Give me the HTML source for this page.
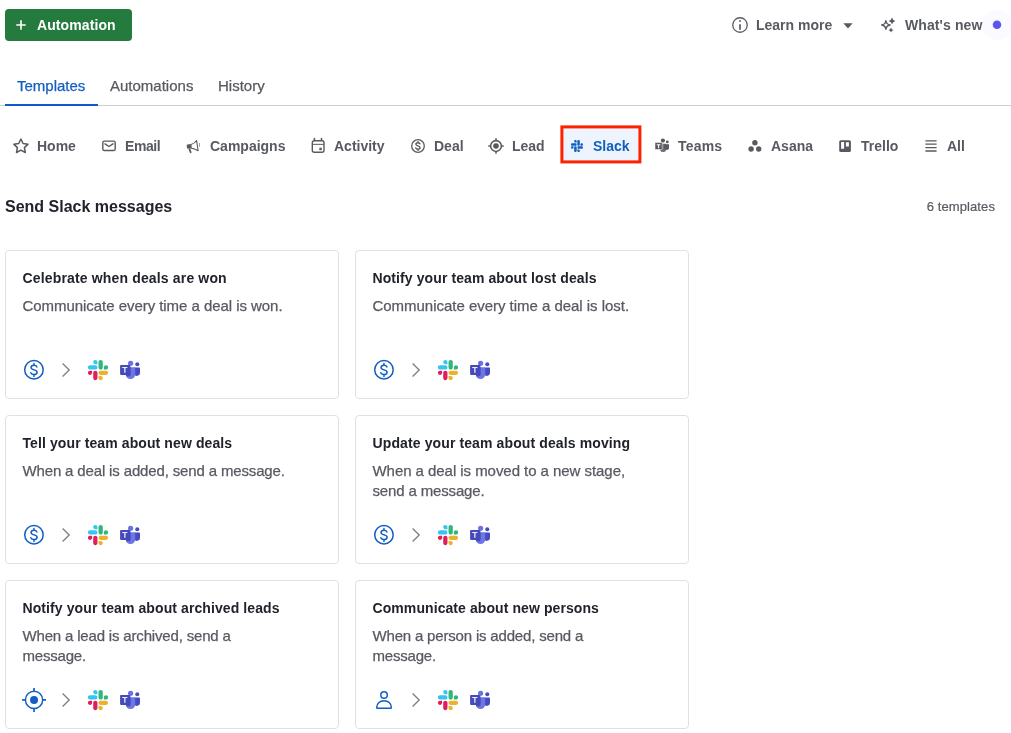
<!DOCTYPE html>
<html>
<head>
<meta charset="utf-8">
<title>Automations</title>
<style>
  html, body { margin: 0; padding: 0; }
  body {
    width: 1011px; height: 733px; overflow: hidden; position: relative;
    background: #ffffff;
    font-family: "Liberation Sans", sans-serif;
    color: #21232c;
  }
  #root { position: absolute; left: 0; top: 0; width: 1011px; height: 733px; will-change: transform; }
  .abs { position: absolute; }
  .t { position: absolute; white-space: nowrap; line-height: 20px; height: 20px; }
  svg { position: absolute; display: block; overflow: visible; }

  /* top bar */
  .btn { left: 5px; top: 9px; width: 127px; height: 32px; background: #257a3e; border-radius: 4px; }
  .btn .lbl { left: 32px; top: 6px; font-size: 14px; font-weight: 700; color: #fff; letter-spacing: 0.1px; }

  .topl { font-size: 14px; font-weight: 700; color: #585a61; top: 15px; }

  /* tabs */
  .tab { font-size: 15px; top: 76px; color: #585a61; -webkit-text-stroke: 0.25px currentColor; }
  .tab.on { color: #135ebf; }
  .tabline { left: 0; top: 105px; width: 1011px; height: 1px; background: #cdced1; }
  .tabon { left: 5px; top: 104px; width: 93px; height: 2px; background: #0f5acb; }

  /* category nav */
  .nav { font-size: 14px; font-weight: 700; color: #585a61; top: 136px; }
  .nav.on { color: #135ebf; }

  .h1 { left: 5px; top: 197px; font-size: 16px; font-weight: 700; color: #21232c; }
  .cnt { right: 16px; top: 197px; font-size: 13px; color: #585a61; letter-spacing: 0.1px; -webkit-text-stroke: 0.2px #585a61; }

  /* cards */
  .card { position: absolute; width: 332px; height: 147px; border: 1px solid #e1e1e4; border-radius: 4px; background: #fff; }
  .card .ttl { left: 16.5px; top: 17px; font-size: 14px; font-weight: 700; color: #21232c; }
  .card .d { left: 16.5px; font-size: 15px; color: #585a61; letter-spacing: -0.05px; -webkit-text-stroke: 0.25px #585a61; }
  .card .d1 { top: 45px; }
  .card .d2 { top: 65px; }
  .card svg.ci { left: -1px; top: -1px; }
</style>
</head>
<body>
<div id="root">

<!-- ===== top bar ===== -->
<div class="abs btn">
  <svg style="left:11px;top:11px" width="10" height="10" viewBox="0 0 10 10"><path d="M5 0.3v9.4M0.3 5h9.4" stroke="#fff" stroke-width="1.6" fill="none"/></svg>
  <span class="t lbl">Automation</span>
</div>

<svg id="ic-info" style="left:732px;top:17px" width="16" height="16" viewBox="0 0 16 16" fill="none" stroke="#585a61"><circle cx="8" cy="8" r="7.250" stroke-width="1.300"/><path d="M8 7.200v5.500" stroke-width="1.700"/><circle cx="8" cy="4.050" r="0.950" fill="#585a61" stroke="none"/></svg>
<span class="t topl" style="left:756px">Learn more</span>
<svg id="ic-caret" style="left:843px;top:22.600px" width="10" height="6" viewBox="0 0 10 6"><path d="M0.3 0.2h9.4L5 5.6z" fill="#585a61"/></svg>

<svg id="ic-spark" style="left:0;top:0" width="1011" height="50" viewBox="0 0 1011 50"><circle cx="997" cy="25" r="15.100" fill="#fafaff"/><circle cx="997" cy="24.750" r="4.250" fill="#5a55ee"/><path d="M885.9 20.75Q886.40 24.45 890.1 24.95Q886.40 25.45 885.9 29.15Q885.40 25.45 881.6999999999999 24.95Q885.40 24.45 885.9 20.75z" fill="none" stroke="#585a61" stroke-width="1.500" stroke-linejoin="round"/><path d="M892 17.5Q892.68 20.22 895.4 20.9Q892.68 21.58 892 24.299999999999997Q891.32 21.58 888.6 20.9Q891.32 20.22 892 17.5z" fill="#585a61"/><path d="M891 27.4Q891.50 29.40 893.5 29.9Q891.50 30.40 891 32.4Q890.50 30.40 888.5 29.9Q890.50 29.40 891 27.4z" fill="#585a61"/></svg>
<span class="t topl" style="left:905px;letter-spacing:0.1px">What's new</span>

<!-- ===== tabs ===== -->
<span class="t tab on" style="left:17px">Templates</span>
<span class="t tab" style="left:110px">Automations</span>
<span class="t tab" style="left:218px">History</span>
<div class="abs tabline"></div>
<div class="abs tabon"></div>

<!-- ===== category nav ===== -->
<svg style="left:0;top:0" width="1011" height="200" viewBox="0 0 1011 200"><rect x="561.900" y="126.900" width="78" height="35" fill="#edf4fe" stroke="#ff2200" stroke-width="3"/></svg>

<span class="t nav" style="left:37px">Home</span>
<span class="t nav" style="left:125px;letter-spacing:-0.4px">Email</span>
<span class="t nav" style="left:210px">Campaigns</span>
<span class="t nav" style="left:334px">Activity</span>
<span class="t nav" style="left:434px">Deal</span>
<span class="t nav" style="left:512px">Lead</span>
<span class="t nav on" style="left:593px">Slack</span>
<span class="t nav" style="left:678px;letter-spacing:0.2px">Teams</span>
<span class="t nav" style="left:771px">Asana</span>
<span class="t nav" style="left:861px">Trello</span>
<span class="t nav" style="left:947px">All</span>

<svg id="navicons" style="left:0;top:0" width="1011" height="733" viewBox="0 0 1011 733" fill="none">
  <defs>
    <g id="slack">
      <path d="M25.8 77.600c0 7.100-5.800 12.900-12.900 12.900S0 84.700 0 77.600s5.800-12.900 12.900-12.900h12.900v12.900z"/>
      <path d="M32.300 77.600c0-7.100 5.800-12.900 12.900-12.900s12.900 5.800 12.900 12.900v32.300c0 7.100-5.800 12.900-12.900 12.900s-12.900-5.800-12.900-12.900V77.600z"/>
    </g>
  </defs>
  <g stroke="#585a61" stroke-width="1.4" stroke-linejoin="round" stroke-linecap="round">
    <!-- star -->
    <path stroke-width="1.500" d="M20.900 139.000l2.150 4.500 4.950 0.650-3.600 3.450 0.900 4.900-4.400-2.400-4.400 2.400 0.900-4.900-3.600-3.450 4.950-0.650z"/>
    <!-- envelope -->
    <rect x="102.800" y="141.100" width="12.400" height="9.400" rx="1.600"/>
    <path d="M105 143.800l4 2.700 4-2.700"/>
    <!-- megaphone -->
    <path d="M191 144.500Q194.600 143.500 196.600 140.500L198.100 150.700Q194.500 148.500 191 148.100z" stroke-width="1.100"/>
    <path d="M186.700 145.300q0-0.700 0.700-0.800l3.400-0.500 0.500 4.100-3.400 0.600q-0.800 0.100-0.900-0.700z" fill="#585a61" stroke="none"/>
    <path d="M189.500 149.100l1.100 3.200" stroke-width="1.800"/>
    <path d="M199.400 143.400q0.500 1.500 0.100 3" stroke-width="0.900" opacity="0.700"/>
    <!-- calendar -->
    <rect x="312.3" y="140.7" width="11.7" height="11.5" rx="2" stroke-width="1.4"/>
    <path d="M312.3 144.35h11.7" stroke-width="1" stroke-linecap="butt"/>
    <path d="M314.4 138.5v2M321.5 138.5v2" stroke-width="1.6"/>
    <rect x="319.3" y="147.7" width="2.5" height="2.5" fill="#585a61" stroke="none"/>
    <!-- deal $ circle -->
    <circle cx="418" cy="146" r="6.300" stroke-width="1.300"/>
    <path d="M420 143.900c-0.400-0.700-1.100-1.100-2.100-1.100-1.200 0-2 0.600-2 1.500 0 2.100 4.200 1.100 4.200 3.300 0 1-0.900 1.600-2.100 1.600-1.100 0-1.900-0.500-2.300-1.300M418 141.600v1.200M418 149.200v1.200" stroke-width="1.35"/>
    <!-- lead target -->
    <circle cx="496" cy="146" r="5.4" stroke-width="1.55"/>
    <circle cx="496" cy="146" r="2.8" fill="#585a61" stroke="none"/>
    <path d="M496 138.3v2M496 151.700v2M488.3 146h2M501.700 146h2" stroke-width="1.5" stroke-linecap="butt"/>
    <!-- list -->
    <path d="M925.400 140.800h11.200M925.400 144.200h11.200M925.400 147.600h11.200M925.400 151h11.200" stroke-width="1.300" stroke-linecap="butt"/>
  </g>
  <!-- slack (blue) -->
  <g transform="translate(571 140) scale(0.0977)" fill="#135ebf">
    <use href="#slack"/>
    <use href="#slack" transform="rotate(90 61.400 61.400)"/>
    <use href="#slack" transform="rotate(180 61.400 61.400)"/>
    <use href="#slack" transform="rotate(270 61.400 61.400)"/>
  </g>
  <!-- teams (grey) -->
  <g fill="#585a61">
    <circle cx="662.900" cy="140.600" r="2.100"/>
    <circle cx="667.300" cy="141.900" r="1.400"/>
    <path d="M660 143.800h6.200v5.200a3.100 3.100 0 0 1-6.200 0z" opacity="0.85"/>
    <path d="M664 144.300h5v3.300a2.500 2.500 0 0 1-5 0z"/>
    <rect x="655" y="142.500" width="7.200" height="7" rx="0.600" stroke="#fff" stroke-width="0.500"/>
    <path d="M656.800 144.200h3.600v1h-1.250v3h-1.100v-3h-1.250z" fill="#fff"/>
  </g>
  <!-- asana -->
  <g fill="#585a61">
    <circle cx="754.900" cy="142.700" r="2.700"/>
    <circle cx="751.100" cy="149" r="2.700"/>
    <circle cx="758.700" cy="149" r="2.700"/>
  </g>
  <!-- trello -->
  <rect x="839.200" y="140.200" width="11.700" height="11.800" rx="1.600" fill="#585a61"/>
  <rect x="841.100" y="142.100" width="3" height="6.700" rx="0.300" fill="#fff"/>
  <rect x="845.900" y="142.200" width="3" height="4.400" rx="0.300" fill="#fff"/>
</svg>


<!-- ===== heading ===== -->
<span class="t h1">Send Slack messages</span>
<span class="t cnt">6 templates</span>

<!-- ===== cards ===== -->
<div class="card" style="left:5px;top:250px"><span class="t ttl" style="letter-spacing:0.156px">Celebrate when deals are won</span><span class="t d d1" style="letter-spacing:-0.047px">Communicate every time a deal is won.</span><svg class="ci" width="334" height="149" viewBox="0 0 334 149"><g fill="none" stroke="#135ebf" stroke-width="1.5" stroke-linecap="round" stroke-linejoin="round"><circle cx="28.950" cy="119.800" r="9.250"/><path d="M31.900 117c-0.450-1.100-1.500-1.750-2.900-1.750-1.750 0-2.950 0.900-2.950 2.250 0 3.150 6.050 1.550 6.050 4.750 0 1.450-1.250 2.350-3.100 2.350-1.550 0-2.700-0.650-3.200-1.850M28.950 113.400v1.850M28.950 124.600v1.850"/></g><path d="M57.600 113.500l6.600 6.500-6.600 6.500" fill="none" stroke="#7c7e86" stroke-width="1.300"/><g transform="translate(82.900 110) scale(0.1645)"><use href="#slack" fill="#e01e5a"/><use href="#slack" fill="#36c5f0" transform="rotate(90 61.400 61.400)"/><use href="#slack" fill="#2eb67d" transform="rotate(180 61.400 61.400)"/><use href="#slack" fill="#ecb22e" transform="rotate(270 61.400 61.400)"/></g><g><circle cx="125.600" cy="113.250" r="2.600" fill="#6a72e0"/><circle cx="132.300" cy="114.200" r="2.050" fill="#464cc0"/><path d="M129.500 117.500h4.700a0.800 0.800 0 0 1 0.800 0.800v4.300a3.300 3.300 0 0 1-6.600 0z" fill="#464cc0"/><path d="M120.800 117.300h8.600a0.800 0.800 0 0 1 0.800 0.800v6.300a4.700 4.700 0 0 1-9.400 0z" fill="#6d76e4"/><path d="M120.800 117.300h4.600v8.200a0.800 0.800 0 0 1-0.800 0.800h-3.300a4.700 4.700 0 0 1-0.500-2.100z" fill="#3a3fa6" opacity="0.750"/><rect x="115.100" y="115" width="10.300" height="9.900" rx="0.800" fill="#444ab9"/><path d="M117.200 117.100h5.200v0.950h-5.200z" fill="#fff"/><path d="M119 118h1.650v4.800h-1.650z" fill="#fff" opacity="0.700"/></g></svg></div>
<div class="card" style="left:355px;top:250px"><span class="t ttl" style="letter-spacing:0.094px">Notify your team about lost deals</span><span class="t d d1" style="letter-spacing:-0.027px">Communicate every time a deal is lost.</span><svg class="ci" width="334" height="149" viewBox="0 0 334 149"><g fill="none" stroke="#135ebf" stroke-width="1.5" stroke-linecap="round" stroke-linejoin="round"><circle cx="28.950" cy="119.800" r="9.250"/><path d="M31.900 117c-0.450-1.100-1.500-1.750-2.900-1.750-1.750 0-2.950 0.900-2.950 2.250 0 3.150 6.050 1.550 6.050 4.750 0 1.450-1.250 2.350-3.100 2.350-1.550 0-2.700-0.650-3.200-1.850M28.950 113.400v1.850M28.950 124.600v1.850"/></g><path d="M57.600 113.500l6.600 6.500-6.600 6.500" fill="none" stroke="#7c7e86" stroke-width="1.300"/><g transform="translate(82.900 110) scale(0.1645)"><use href="#slack" fill="#e01e5a"/><use href="#slack" fill="#36c5f0" transform="rotate(90 61.400 61.400)"/><use href="#slack" fill="#2eb67d" transform="rotate(180 61.400 61.400)"/><use href="#slack" fill="#ecb22e" transform="rotate(270 61.400 61.400)"/></g><g><circle cx="125.600" cy="113.250" r="2.600" fill="#6a72e0"/><circle cx="132.300" cy="114.200" r="2.050" fill="#464cc0"/><path d="M129.500 117.500h4.700a0.800 0.800 0 0 1 0.800 0.800v4.300a3.300 3.300 0 0 1-6.600 0z" fill="#464cc0"/><path d="M120.800 117.300h8.600a0.800 0.800 0 0 1 0.800 0.800v6.300a4.700 4.700 0 0 1-9.400 0z" fill="#6d76e4"/><path d="M120.800 117.300h4.600v8.200a0.800 0.800 0 0 1-0.800 0.800h-3.300a4.700 4.700 0 0 1-0.500-2.100z" fill="#3a3fa6" opacity="0.750"/><rect x="115.100" y="115" width="10.300" height="9.900" rx="0.800" fill="#444ab9"/><path d="M117.200 117.100h5.200v0.950h-5.200z" fill="#fff"/><path d="M119 118h1.650v4.800h-1.650z" fill="#fff" opacity="0.700"/></g></svg></div>
<div class="card" style="left:5px;top:415px"><span class="t ttl" style="letter-spacing:0.100px">Tell your team about new deals</span><span class="t d d1" style="letter-spacing:-0.147px">When a deal is added, send a message.</span><svg class="ci" width="334" height="149" viewBox="0 0 334 149"><g fill="none" stroke="#135ebf" stroke-width="1.5" stroke-linecap="round" stroke-linejoin="round"><circle cx="28.950" cy="119.800" r="9.250"/><path d="M31.900 117c-0.450-1.100-1.500-1.750-2.900-1.750-1.750 0-2.950 0.900-2.950 2.250 0 3.150 6.050 1.550 6.050 4.750 0 1.450-1.250 2.350-3.100 2.350-1.550 0-2.700-0.650-3.200-1.850M28.950 113.400v1.850M28.950 124.600v1.850"/></g><path d="M57.600 113.500l6.600 6.500-6.600 6.500" fill="none" stroke="#7c7e86" stroke-width="1.300"/><g transform="translate(82.900 110) scale(0.1645)"><use href="#slack" fill="#e01e5a"/><use href="#slack" fill="#36c5f0" transform="rotate(90 61.400 61.400)"/><use href="#slack" fill="#2eb67d" transform="rotate(180 61.400 61.400)"/><use href="#slack" fill="#ecb22e" transform="rotate(270 61.400 61.400)"/></g><g><circle cx="125.600" cy="113.250" r="2.600" fill="#6a72e0"/><circle cx="132.300" cy="114.200" r="2.050" fill="#464cc0"/><path d="M129.500 117.500h4.700a0.800 0.800 0 0 1 0.800 0.800v4.300a3.300 3.300 0 0 1-6.600 0z" fill="#464cc0"/><path d="M120.800 117.300h8.600a0.800 0.800 0 0 1 0.800 0.800v6.300a4.700 4.700 0 0 1-9.400 0z" fill="#6d76e4"/><path d="M120.800 117.300h4.600v8.200a0.800 0.800 0 0 1-0.800 0.800h-3.300a4.700 4.700 0 0 1-0.500-2.100z" fill="#3a3fa6" opacity="0.750"/><rect x="115.100" y="115" width="10.300" height="9.900" rx="0.800" fill="#444ab9"/><path d="M117.200 117.100h5.200v0.950h-5.200z" fill="#fff"/><path d="M119 118h1.650v4.800h-1.650z" fill="#fff" opacity="0.700"/></g></svg></div>
<div class="card" style="left:355px;top:415px"><span class="t ttl" style="letter-spacing:0.115px">Update your team about deals moving</span><span class="t d d1" style="letter-spacing:-0.049px">When a deal is moved to a new stage,</span><span class="t d d2" style="letter-spacing:-0.150px">send a message.</span><svg class="ci" width="334" height="149" viewBox="0 0 334 149"><g fill="none" stroke="#135ebf" stroke-width="1.5" stroke-linecap="round" stroke-linejoin="round"><circle cx="28.950" cy="119.800" r="9.250"/><path d="M31.900 117c-0.450-1.100-1.500-1.750-2.900-1.750-1.750 0-2.950 0.900-2.950 2.250 0 3.150 6.050 1.550 6.050 4.750 0 1.450-1.250 2.350-3.100 2.350-1.550 0-2.700-0.650-3.200-1.850M28.950 113.400v1.850M28.950 124.600v1.850"/></g><path d="M57.600 113.500l6.600 6.500-6.600 6.500" fill="none" stroke="#7c7e86" stroke-width="1.300"/><g transform="translate(82.900 110) scale(0.1645)"><use href="#slack" fill="#e01e5a"/><use href="#slack" fill="#36c5f0" transform="rotate(90 61.400 61.400)"/><use href="#slack" fill="#2eb67d" transform="rotate(180 61.400 61.400)"/><use href="#slack" fill="#ecb22e" transform="rotate(270 61.400 61.400)"/></g><g><circle cx="125.600" cy="113.250" r="2.600" fill="#6a72e0"/><circle cx="132.300" cy="114.200" r="2.050" fill="#464cc0"/><path d="M129.500 117.500h4.700a0.800 0.800 0 0 1 0.800 0.800v4.300a3.300 3.300 0 0 1-6.600 0z" fill="#464cc0"/><path d="M120.800 117.300h8.600a0.800 0.800 0 0 1 0.800 0.800v6.300a4.700 4.700 0 0 1-9.400 0z" fill="#6d76e4"/><path d="M120.800 117.300h4.600v8.200a0.800 0.800 0 0 1-0.800 0.800h-3.300a4.700 4.700 0 0 1-0.500-2.100z" fill="#3a3fa6" opacity="0.750"/><rect x="115.100" y="115" width="10.300" height="9.900" rx="0.800" fill="#444ab9"/><path d="M117.200 117.100h5.200v0.950h-5.200z" fill="#fff"/><path d="M119 118h1.650v4.800h-1.650z" fill="#fff" opacity="0.700"/></g></svg></div>
<div class="card" style="left:5px;top:580px"><span class="t ttl" style="letter-spacing:0.095px">Notify your team about archived leads</span><span class="t d d1" style="letter-spacing:-0.170px">When a lead is archived, send a</span><span class="t d d2" style="letter-spacing:-0.200px">message.</span><svg class="ci" width="334" height="149" viewBox="0 0 334 149"><g fill="none" stroke="#135ebf"><circle cx="29.050" cy="119.900" r="8.600" stroke-width="1.450"/><circle cx="29.050" cy="119.900" r="4" fill="#135ebf" stroke="none"/><path d="M29.050 108v3.200M29.050 128.800v3.200M17.100 119.900h3.200M37.800 119.900h3.200" stroke-width="1.700"/></g><path d="M57.600 113.500l6.600 6.500-6.600 6.500" fill="none" stroke="#7c7e86" stroke-width="1.300"/><g transform="translate(82.900 110) scale(0.1645)"><use href="#slack" fill="#e01e5a"/><use href="#slack" fill="#36c5f0" transform="rotate(90 61.400 61.400)"/><use href="#slack" fill="#2eb67d" transform="rotate(180 61.400 61.400)"/><use href="#slack" fill="#ecb22e" transform="rotate(270 61.400 61.400)"/></g><g><circle cx="125.600" cy="113.250" r="2.600" fill="#6a72e0"/><circle cx="132.300" cy="114.200" r="2.050" fill="#464cc0"/><path d="M129.500 117.500h4.700a0.800 0.800 0 0 1 0.800 0.800v4.300a3.300 3.300 0 0 1-6.600 0z" fill="#464cc0"/><path d="M120.800 117.300h8.600a0.800 0.800 0 0 1 0.800 0.800v6.300a4.700 4.700 0 0 1-9.400 0z" fill="#6d76e4"/><path d="M120.800 117.300h4.600v8.200a0.800 0.800 0 0 1-0.800 0.800h-3.300a4.700 4.700 0 0 1-0.500-2.100z" fill="#3a3fa6" opacity="0.750"/><rect x="115.100" y="115" width="10.300" height="9.900" rx="0.800" fill="#444ab9"/><path d="M117.200 117.100h5.200v0.950h-5.200z" fill="#fff"/><path d="M119 118h1.650v4.800h-1.650z" fill="#fff" opacity="0.700"/></g></svg></div>
<div class="card" style="left:355px;top:580px"><span class="t ttl" style="letter-spacing:0.082px">Communicate about new persons</span><span class="t d d1" style="letter-spacing:-0.179px">When a person is added, send a</span><span class="t d d2" style="letter-spacing:-0.200px">message.</span><svg class="ci" width="334" height="149" viewBox="0 0 334 149"><g fill="none" stroke="#135ebf" stroke-width="1.500" stroke-linejoin="round"><circle cx="29.050" cy="114.900" r="3.250"/><path d="M21.700 127.400C21.700 123.300 25 120.700 29.050 120.700S36.400 123.300 36.400 127.400a0.950 0.950 0 0 1-0.950 0.950H22.650a0.950 0.950 0 0 1-0.950-0.950z"/></g><path d="M57.600 113.500l6.600 6.500-6.600 6.500" fill="none" stroke="#7c7e86" stroke-width="1.300"/><g transform="translate(82.900 110) scale(0.1645)"><use href="#slack" fill="#e01e5a"/><use href="#slack" fill="#36c5f0" transform="rotate(90 61.400 61.400)"/><use href="#slack" fill="#2eb67d" transform="rotate(180 61.400 61.400)"/><use href="#slack" fill="#ecb22e" transform="rotate(270 61.400 61.400)"/></g><g><circle cx="125.600" cy="113.250" r="2.600" fill="#6a72e0"/><circle cx="132.300" cy="114.200" r="2.050" fill="#464cc0"/><path d="M129.500 117.500h4.700a0.800 0.800 0 0 1 0.800 0.800v4.300a3.300 3.300 0 0 1-6.600 0z" fill="#464cc0"/><path d="M120.800 117.300h8.600a0.800 0.800 0 0 1 0.800 0.800v6.300a4.700 4.700 0 0 1-9.400 0z" fill="#6d76e4"/><path d="M120.800 117.300h4.600v8.200a0.800 0.800 0 0 1-0.800 0.800h-3.300a4.700 4.700 0 0 1-0.500-2.100z" fill="#3a3fa6" opacity="0.750"/><rect x="115.100" y="115" width="10.300" height="9.900" rx="0.800" fill="#444ab9"/><path d="M117.200 117.100h5.200v0.950h-5.200z" fill="#fff"/><path d="M119 118h1.650v4.800h-1.650z" fill="#fff" opacity="0.700"/></g></svg></div>

</div>
</body>
</html>
